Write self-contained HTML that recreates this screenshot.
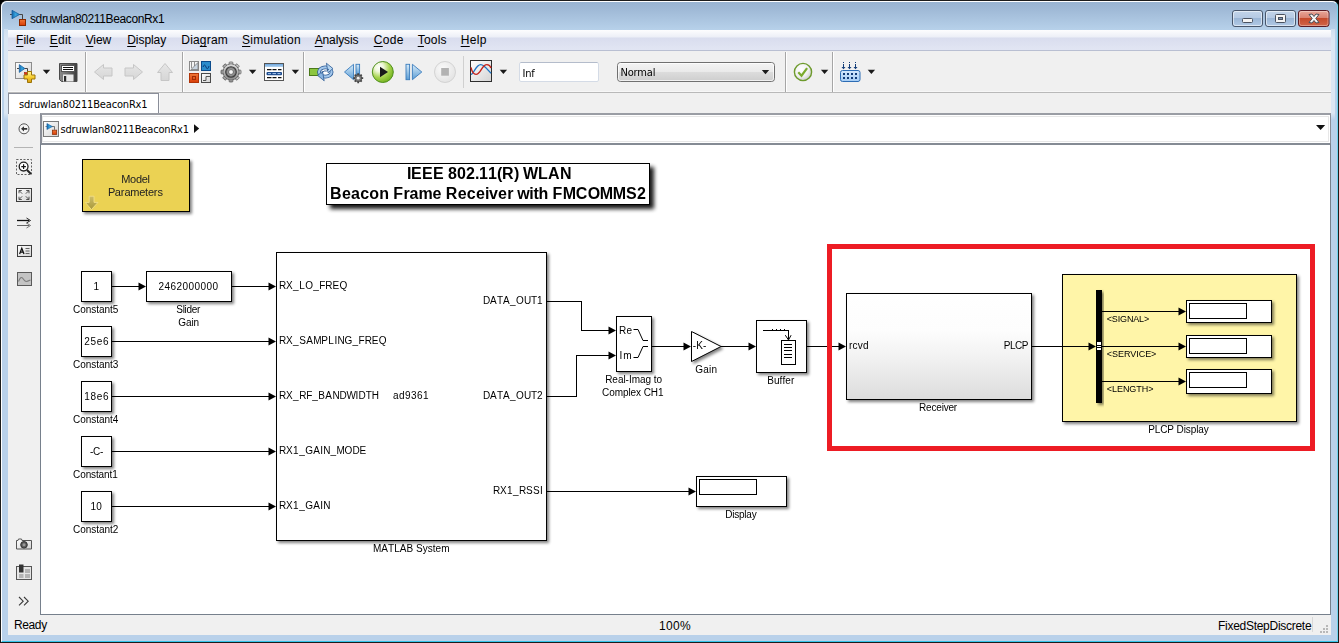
<!DOCTYPE html>
<html><head><meta charset="utf-8"><title>sdruwlan80211BeaconRx1</title>
<style>
*{box-sizing:border-box;margin:0;padding:0}
html,body{width:1339px;height:643px;overflow:hidden;background:#000;font-family:"Liberation Sans",sans-serif;}
#win{position:absolute;left:0;top:0;width:1339px;height:643px;background:linear-gradient(#98b3d1 0,#9fb9d6 8px,#b7d1ea 29px,#b9d1ea 60px,#b9d1ea 100%);border:1px solid #1c1c1c;border-radius:7px 7px 0 0;}
#hl{position:absolute;left:1px;top:1px;width:1337px;height:641px;border:1px solid #fff;border-right-color:#6fd3ee;border-bottom-color:#35c4ea;border-radius:6px 6px 0 0;}
.t{position:absolute;white-space:nowrap;color:#000;line-height:1}
.t u{text-decoration-skip-ink:none;text-underline-offset:2px}
.seg{font-family:"Liberation Sans",sans-serif;font-size:12px;letter-spacing:-0.38px}
.tah{font-family:"DejaVu Sans Condensed","DejaVu Sans",sans-serif;font-size:11px;letter-spacing:-0.17px}
#menubar{position:absolute;left:8px;top:30px;width:1323px;height:21px;background:linear-gradient(#fdfdfe 0,#eceff7 7px,#d9ddee 8px,#e1e5f3 19px,#e1e5f3 100%);border-bottom:1px solid #b9bfd2}
#toolbar{position:absolute;left:8px;top:51px;width:1323px;height:42px;background:#f0f0f0;border-bottom:1px solid #b9b9b9;box-shadow:inset 0 -1px 0 #f7f7f7}
#tabrow{position:absolute;left:8px;top:93px;width:1323px;height:21px;background:#f0f0f0}
#tab{position:absolute;left:0px;top:0px;width:151px;height:21px;background:#fff;border:1px solid #8a8e99;border-bottom:none;box-shadow:1px 0 0 #fafafa}
#main{position:absolute;left:8px;top:114px;width:1323px;height:501px;background:#f0f0f0}
#crumb{position:absolute;left:32px;top:-1px;width:1291px;height:30px;background:#fff;border:2px solid #8a8e98;border-top-color:#9a9da4 ;border-right-width:1px;border-bottom:none}
#crumb i{position:absolute;left:0;top:1px;right:1px;bottom:1px;border:1px solid #e7e7e7}
#canvas{position:absolute;left:32px;top:29px;width:1291px;height:472px;background:#fff;border:1px solid #76808c;border-top:2px solid #858b94}
#status{position:absolute;left:8px;top:615px;width:1323px;height:20px;background:#f0f0f0;}
</style></head><body>
<div id="win"></div><div id="hl"></div>
<div class="t seg" style="left:30px;top:13px">sdruwlan80211BeaconRx1</div>
<div style="position:absolute;left:4px;top:29px;width:4px;height:91px;background:linear-gradient(#cfdff0 0,#dbe7f4 10px,#dbe7f4 84px,#b9d1ea 91px)"></div><div style="position:absolute;left:1331px;top:29px;width:4px;height:91px;background:linear-gradient(#cfdff0 0,#dbe7f4 10px,#dbe7f4 84px,#b9d1ea 91px)"></div>
<div id="menubar"></div>
<div class="t seg" style="left:16.1px;top:34px;letter-spacing:-0.03px"><u>F</u>ile</div>
<div class="t seg" style="left:49.7px;top:34px;letter-spacing:0.27px"><u>E</u>dit</div>
<div class="t seg" style="left:85.7px;top:34px;letter-spacing:-0.13px"><u>V</u>iew</div>
<div class="t seg" style="left:127.2px;top:34px;letter-spacing:-0.05px"><u>D</u>isplay</div>
<div class="t seg" style="left:181.3px;top:34px;letter-spacing:0.18px">Dia<u>g</u>ram</div>
<div class="t seg" style="left:242.0px;top:34px;letter-spacing:0.29px"><u>S</u>imulation</div>
<div class="t seg" style="left:314.7px;top:34px;letter-spacing:-0.13px"><u>A</u>nalysis</div>
<div class="t seg" style="left:373.7px;top:34px;letter-spacing:0.37px"><u>C</u>ode</div>
<div class="t seg" style="left:417.7px;top:34px;letter-spacing:0.22px"><u>T</u>ools</div>
<div class="t seg" style="left:460.7px;top:34px;letter-spacing:0.37px"><u>H</u>elp</div>

<div id="toolbar"></div>
<div id="tabrow"><div id="tab"></div></div>
<div class="t tah" style="left:19px;top:99px">sdruwlan80211BeaconRx1</div>
<div id="main">
<div id="crumb"><i></i></div>
<div id="canvas"></div>
</div>
<div class="t tah" style="left:60.500px;top:124px">sdruwlan80211BeaconRx1</div>
<div id="status"></div>
<div class="t seg" style="left:14px;top:619px">Ready</div>
<div class="t seg" style="left:659px;top:620px;letter-spacing:0.3px">100%</div>
<div class="t seg" style="left:1218px;top:620px;letter-spacing:-0.28px">FixedStepDiscrete</div>
<svg id="ov" width="1339" height="643" style="position:absolute;left:0;top:0;will-change:transform">
<defs>
<linearGradient id="gDoc" x1="0" y1="0" x2="1" y2="1"><stop offset="0" stop-color="#fff"/><stop offset="1" stop-color="#d4d4d4"/></linearGradient>
<linearGradient id="gBlueTri" x1="0" y1="0" x2="1" y2="0"><stop offset="0" stop-color="#1464a8"/><stop offset="0.5" stop-color="#3aa8e0"/><stop offset="1" stop-color="#1c78c0"/></linearGradient>
<linearGradient id="gOr" x1="0" y1="0" x2="0" y2="1"><stop offset="0" stop-color="#f07838"/><stop offset="1" stop-color="#d83c08"/></linearGradient>
<linearGradient id="gGold" x1="0" y1="0" x2="0" y2="1"><stop offset="0" stop-color="#fff6a0"/><stop offset="0.5" stop-color="#f8d030"/><stop offset="1" stop-color="#d89c10"/></linearGradient>
<linearGradient id="gFlop" x1="0" y1="0" x2="1" y2="0"><stop offset="0" stop-color="#8a8a8a"/><stop offset="0.5" stop-color="#6a6a6a"/><stop offset="1" stop-color="#3c3c3c"/></linearGradient>
<linearGradient id="gArr" x1="0" y1="0" x2="0" y2="1"><stop offset="0" stop-color="#e6e6e6"/><stop offset="1" stop-color="#d6d6d6"/></linearGradient>
<linearGradient id="gLB" x1="0" y1="0" x2="0" y2="1"><stop offset="0" stop-color="#d8ecfa"/><stop offset="1" stop-color="#5a9cd4"/></linearGradient>
<radialGradient id="gPlay" cx="0.33" cy="0.28" r="0.8"><stop offset="0" stop-color="#fff"/><stop offset="0.25" stop-color="#f0f8dc"/><stop offset="0.6" stop-color="#a8d450"/><stop offset="1" stop-color="#6cae18"/></radialGradient>
<radialGradient id="gStop" cx="0.4" cy="0.35" r="0.7"><stop offset="0" stop-color="#fafafa"/><stop offset="1" stop-color="#e2e2e2"/></radialGradient>
<radialGradient id="gChk" cx="0.4" cy="0.35" r="0.7"><stop offset="0" stop-color="#fff"/><stop offset="0.6" stop-color="#f0f0f0"/><stop offset="1" stop-color="#c4c4c4"/></radialGradient>
<linearGradient id="gCombo" x1="0" y1="0" x2="0" y2="1"><stop offset="0" stop-color="#f4f4f4"/><stop offset="0.48" stop-color="#eaeaea"/><stop offset="0.52" stop-color="#dcdcdc"/><stop offset="1" stop-color="#cdcdcd"/></linearGradient>
<linearGradient id="gBtn" x1="0" y1="0" x2="0" y2="1"><stop offset="0" stop-color="#c3d5ea"/><stop offset="0.48" stop-color="#b4c9e3"/><stop offset="0.5" stop-color="#9bb6d6"/><stop offset="1" stop-color="#b3cbe6"/></linearGradient>
<linearGradient id="gClose" x1="0" y1="0" x2="0" y2="1"><stop offset="0" stop-color="#e9a99c"/><stop offset="0.48" stop-color="#d9806e"/><stop offset="0.5" stop-color="#c54a2c"/><stop offset="1" stop-color="#d2674a"/></linearGradient>
<linearGradient id="gGear" x1="0" y1="0" x2="0" y2="1"><stop offset="0" stop-color="#dadada"/><stop offset="1" stop-color="#8c8c8c"/></linearGradient>
<linearGradient id="gTblH" x1="0" y1="0" x2="0" y2="1"><stop offset="0" stop-color="#6aa4dc"/><stop offset="1" stop-color="#b4d4f0"/></linearGradient>
<linearGradient id="gBld" x1="0" y1="0" x2="0" y2="1"><stop offset="0" stop-color="#d4e8fc"/><stop offset="1" stop-color="#a4ccf4"/></linearGradient>
<path id="dd" d="M0 0h7.400l-3.700 4.200z" fill="#1a1a1a"/>
<g id="mdl"><path d="M0 4.500h2M9 4.500h3.500v4.500" stroke="#444" fill="none"/><path d="M2 0.300l7.500 4.200l-7.500 4.200z" fill="url(#gBlueTri)" stroke="#175f9f" stroke-width="0.800"/><rect x="9.500" y="9.500" width="6" height="6" fill="url(#gOr)" stroke="#8a2a00"/></g>
</defs>
<!-- title icon -->
<use href="#mdl" x="10" y="10"/>
<!-- caption buttons -->
<g stroke="#48566b" stroke-width="1">
<rect x="1232.500" y="10.500" width="30" height="16" rx="2.500" fill="url(#gBtn)"/>
<rect x="1265.500" y="10.500" width="30" height="16" rx="2.500" fill="url(#gBtn)"/>
<rect x="1298.500" y="10.500" width="30.500" height="16" rx="2.500" fill="url(#gClose)" stroke="#5a1a24"/>
</g>
<g fill="none" stroke="rgba(255,255,255,.55)"><rect x="1233.500" y="11.500" width="28" height="14" rx="2"/><rect x="1266.500" y="11.500" width="28" height="14" rx="2"/><rect x="1299.500" y="11.500" width="28.500" height="14" rx="2" stroke="rgba(255,255,255,.35)"/></g>
<rect x="1242.500" y="18.500" width="10" height="4" rx="1" fill="#f4f4f4" stroke="#4a5260"/>
<rect x="1275.500" y="14.500" width="10" height="8" rx="1" fill="#f4f4f4" stroke="#4a5260"/><rect x="1278.500" y="17.500" width="4" height="2" fill="#7f95b4" stroke="#4a5260"/>
<path d="M1309 14.500l3-0.500l2 2.500l2-2.500l3 0.500l-3.200 4l3.200 4l-3 0.500l-2-2.500l-2 2.500l-3-0.500l3.200-4z" fill="#f6f6f6" stroke="#4b4f58" stroke-width="1" stroke-linejoin="round"/>
<!-- toolbar separators -->
<g stroke="#a6a6a6"><path d="M85.500 52V92M182.500 52V92M303.500 52V92M785.500 52V92M832.500 52V92"/><path d="M463.500 56V88" stroke="#d0d0d0"/></g>
<g stroke="#fff"><path d="M86.500 52V92M183.500 52V92M304.500 52V92M786.500 52V92M833.500 52V92"/></g>
<!-- new model -->
<rect x="15.500" y="62.500" width="16" height="16" fill="url(#gDoc)" stroke="#8c8c8c"/>
<path d="M17 68.500h2M24.500 68.500h3v3.500" stroke="#444" fill="none"/><path d="M19.300 64.600l5.600 3.900l-5.600 3.900z" fill="url(#gBlueTri)" stroke="#175f9f" stroke-width="0.700"/><rect x="24.500" y="72.500" width="3" height="2" fill="#e03010" stroke="#a02000" stroke-width="0.600"/>
<path d="M27.500 71.500h4v3.500h3.500v4h-3.500v3.500h-4v-3.500h-3.500v-4h3.500z" fill="url(#gGold)" stroke="#9c7408" stroke-width="1"/>
<use href="#dd" x="42.800" y="69.800"/>
<!-- save -->
<path d="M59.500 63.500h17.500v18h-15.500l-2-2z" fill="url(#gFlop)" stroke="#4a4a4a"/>
<rect x="61.500" y="65.500" width="13" height="6" fill="#fff" stroke="#555"/><path d="M63 67.500h10M63 69.500h10" stroke="#111"/>
<rect x="63" y="74.500" width="10.500" height="7" fill="#e9e9e9"/><rect x="64" y="76" width="2.200" height="5.500" fill="#2a2a2a"/>
<!-- nav arrows -->
<g fill="url(#gArr)" stroke="#c6c6c6"><path d="M94.500 72l9-7.500v3.500h8.500v8h-8.500v3.500z"/><path d="M142.500 72l-9-7.500v3.500h-8.500v8h8.500v3.500z"/><path d="M165 63.500l7.500 9h-3.500v8h-8v-8h-3.500z"/></g>
<!-- library browser -->
<rect x="189.500" y="61.500" width="9" height="9" fill="#f4f4f4" stroke="#8a8a8a"/><path d="M191.500 62v6M194.500 62v4M191 69.500l7-7v7z" stroke="#777" fill="#c8d4e0" stroke-width="0.800"/>
<rect x="201.500" y="61.500" width="9" height="9" fill="#2a8ccc" stroke="#0c4c8c"/><path d="M203 67q1.500-4 3 0t3-1" stroke="#0a3c78" fill="none" stroke-width="1"/>
<rect x="189.500" y="73.500" width="9" height="9" fill="url(#gOr)" stroke="#b03408"/><rect x="192.500" y="76.500" width="3" height="3" fill="none" stroke="#a02c04"/>
<rect x="201.500" y="73.500" width="9" height="9" fill="url(#gDoc)" stroke="#4a4a4a"/><path d="M203 80.500h3v-4h4" stroke="#555" fill="none"/>
<!-- gear -->
<g transform="translate(231 72)"><g fill="url(#gGear)" stroke="#505050" stroke-width="0.700"><g id="teeth"><rect x="-1.900" y="-10" width="3.800" height="3.500" rx="0.800"/><rect x="-1.900" y="6.500" width="3.800" height="3.500" rx="0.800"/></g>
<use href="#teeth" transform="rotate(45)"/><use href="#teeth" transform="rotate(90)"/><use href="#teeth" transform="rotate(135)"/><circle r="8"/></g>
<circle r="7.400" fill="url(#gGear)"/><circle r="5.300" fill="#7a7a7a" stroke="#3c3c3c" stroke-width="1.100"/><circle r="3.300" fill="none" stroke="#a8a8a8" stroke-width="0.900"/><circle r="2.400" fill="#f8f8f8" stroke="#444" stroke-width="0.600"/></g>
<use href="#dd" x="248.900" y="69.800"/>
<!-- table -->
<rect x="264.500" y="63.500" width="19" height="17" fill="#fff" stroke="#555"/><rect x="265" y="64" width="18" height="3" fill="url(#gTblH)"/>
<g stroke="#111" stroke-width="1.200"><path d="M267 69.600h4.500M272.500 69.600h4M278 69.600h3.500M267 77.600h4.500M272.500 77.600h4M278 77.600h3.500"/></g>
<rect x="266.500" y="72" width="15.500" height="3.200" rx="1" fill="#1c4a8c"/><path d="M268 73.600h3M272.500 73.600h3.500M277.500 73.600h3" stroke="#a8c8f0" stroke-width="1"/>
<use href="#dd" x="291.700" y="69.800"/>
<!-- update diagram -->
<rect x="309.500" y="68.500" width="9" height="7" fill="#8cc63f" stroke="#4b7a1a"/>
<ellipse cx="325.300" cy="72" rx="6.300" ry="4.700" fill="#fff" stroke="#2c5a94" stroke-width="3.800"/><ellipse cx="325.300" cy="72" rx="6.300" ry="4.700" fill="none" stroke="#a4c8ec" stroke-width="2.200"/>
<path d="M326.400 63.200l6.500 5.300l-4.800 4.300z" fill="#b4d4f0" stroke="#2c5a94" stroke-width="0.800" stroke-linejoin="round"/><path d="M324.200 80.800l-6.500-5.300l4.800-4.300z" fill="#8ab4e0" stroke="#2c5a94" stroke-width="0.800" stroke-linejoin="round"/>
<path d="M321.500 73.500l2.500-2.500h2.500l2.500-2" stroke="#2c5a94" stroke-width="0.900" fill="none"/>
<!-- step back -->
<path d="M344.500 72l9-7.700v15.400z" fill="url(#gLB)" stroke="#3a7cbc" stroke-width="0.900"/><rect x="356" y="64.300" width="3.600" height="10" fill="url(#gLB)" stroke="#3a7cbc" stroke-width="0.900"/>
<g transform="translate(358.200 78.200)"><circle r="3.600" fill="#666" stroke="#333" stroke-width="0.600"/><g stroke="#444" stroke-width="1.800"><path d="M0-5V5M-5 0H5M-3.500-3.500L3.500 3.500M-3.500 3.500L3.500-3.500"/></g><circle r="3" fill="#777"/><circle r="1.400" fill="#f0f0f0"/></g>
<!-- play -->
<circle cx="382.800" cy="72" r="10.500" fill="url(#gPlay)" stroke="#4f8f1c" stroke-width="1"/><path d="M380 66.800l8 5.200l-8 5.200z" fill="#1a1a1a"/>
<!-- step fwd -->
<rect x="406" y="64.300" width="3.600" height="15.400" fill="url(#gLB)" stroke="#3a7cbc" stroke-width="0.900"/><path d="M412.400 64.300l9.400 7.700l-9.400 7.700z" fill="url(#gLB)" stroke="#3a7cbc" stroke-width="0.900"/>
<!-- stop -->
<circle cx="445" cy="72" r="10.500" fill="url(#gStop)" stroke="#d2d2d2" stroke-width="1"/><rect x="441.200" y="68" width="7.700" height="7.700" fill="#b2b2b2"/>
<!-- scope -->
<rect x="470.500" y="60.500" width="21" height="21" fill="url(#gDoc)" stroke="#2e2e2e"/>
<path d="M471 74.400C474 74.400 475.500 64.600 480.800 64.600C484 64.600 487 69 491 73.300" stroke="#1c74c4" fill="none" stroke-width="1.400"/><path d="M471 67.400C472 72 474 74.400 476 74.400C481 74.400 481.500 64.600 486.900 64.600C489 64.600 490.500 66.500 491 68" stroke="#c4241c" fill="none" stroke-width="1.400"/>
<use href="#dd" x="499.700" y="69.800"/>
<!-- Inf field -->
<rect x="519.500" y="62.500" width="79" height="19" rx="1.500" fill="#fff" stroke="#d4dbe6"/><path d="M520.500 62.500h77" stroke="#b4bccb"/>
<!-- combo -->
<rect x="617.500" y="62.500" width="157" height="19" rx="3" fill="url(#gCombo)" stroke="#707070"/><rect x="618.500" y="63.500" width="155" height="17" rx="2" fill="none" stroke="rgba(255,255,255,.7)"/>
<use href="#dd" x="761.800" y="70"/>
<!-- check -->
<circle cx="803" cy="72" r="8.600" fill="url(#gChk)" stroke="#6d9a2c" stroke-width="1.400"/><path d="M798.300 72.300l3.200 3.400l5.600-7.600" stroke="#7bab2e" stroke-width="2.200" fill="none"/>
<use href="#dd" x="820.900" y="69.800"/>
<!-- build -->
<rect x="840.500" y="70.500" width="19.500" height="11" rx="2" fill="url(#gBld)" stroke="#2c6cb4"/>
<g fill="#123c78"><rect x="843" y="73" width="2" height="2"/><rect x="847" y="73" width="2" height="2"/><rect x="851" y="73" width="2" height="2"/><rect x="855" y="73" width="2" height="2"/><rect x="843" y="77" width="2" height="2"/><rect x="847" y="77" width="2" height="2"/><rect x="851" y="77" width="2" height="2"/><rect x="855" y="77" width="2" height="2"/>
<path id="ba" d="M843 62h1v1h-1zM843 64h1v3h1.500l-2 2.300l-2-2.300h1.500z"/><use href="#ba" x="6"/><use href="#ba" x="12"/></g>
<use href="#dd" x="867.700" y="69.800"/>
<!-- breadcrumb -->
<circle cx="24" cy="128.800" r="5" fill="#f4f4f4" stroke="#555" stroke-width="1"/><path d="M21 128.800l3-2.600v1.700h3.200v1.800h-3.200v1.700z" fill="#333"/>
<rect x="43.500" y="121.500" width="15" height="15" fill="url(#gDoc)" stroke="#7a7a7a"/>
<g transform="translate(45.500 123.300) scale(0.720)"><use href="#mdl"/></g>
<path d="M194 124.200l5.200 4.400l-5.200 4.400z" fill="#111"/>
<path d="M1316 125h9.200l-4.600 5z" fill="#111"/>
<!-- palette -->
<path d="M14 147.500h19" stroke="#b4b4b4"/>
<rect x="16.500" y="159.500" width="15" height="15" fill="none" stroke="#555" stroke-dasharray="2 1.500" stroke-width="0.900"/><circle cx="23.600" cy="166.600" r="4.400" fill="#fff" stroke="#222" stroke-width="1.300"/><path d="M21.300 166.600h4.600M23.600 164.300v4.600" stroke="#111" stroke-width="1.200"/><path d="M27 170l4 4" stroke="#222" stroke-width="2"/>
<rect x="16.500" y="188.500" width="15" height="13" fill="url(#gDoc)" stroke="#3c3c3c" stroke-width="1"/><path d="M19 193.300v-2.800h2.800M19.300 190.800l2.900 2.900M29 193.300v-2.800h-2.800M28.700 190.800l-2.900 2.900M19 196.700v2.800h2.800M19.300 199.200l2.900-2.900M29 196.700v2.800h-2.800M28.700 199.200l-2.900-2.900" stroke="#3a3a3a" stroke-width="0.850" fill="none"/>
<path d="M17 220.500h12" stroke="#111" stroke-width="1.300"/><path d="M17 225.500h12" stroke="#555" stroke-width="0.900"/><path d="M26.500 218l4 2.500l-4 2.500" stroke="#111" fill="none" stroke-width="0.900"/><path d="M26.500 223l4 2.500l-4 2.500" stroke="#555" fill="none" stroke-width="0.800"/>
<rect x="17.500" y="245.500" width="14" height="11" fill="url(#gDoc)" stroke="#3c3c3c" stroke-width="1"/><path d="M19.600 254l2.200-5.800l2.200 5.800M20.400 252.200h2.800" stroke="#111" fill="none" stroke-width="1.250"/><path d="M25.500 248.500h4M25.500 251h4M25.500 253.500h4" stroke="#444" stroke-width="0.800"/>
<rect x="17.500" y="272.500" width="14" height="13" fill="#c4c4c4" stroke="#5a5a5a" stroke-width="1"/><path d="M18.500 281.500q2.200-6 4.400-3t3.200 3t4.400-1.500" stroke="#7e7e7e" fill="none" stroke-width="1.100"/>
<!-- bottom palette -->
<path d="M16.500 540.500h1.500l0.500-1.500h3l0.500 1.500h9.500v8.500h-15z" fill="url(#gDoc)" stroke="#555"/><circle cx="24" cy="544.800" r="3.300" fill="#5a5a5a" stroke="#333"/><circle cx="24" cy="544.800" r="1.500" fill="#9a9a9a"/>
<rect x="16.500" y="566.500" width="15" height="13" fill="#e6e6e6" stroke="#555"/><rect x="19" y="564.500" width="4.500" height="8" fill="#333"/><rect x="25" y="569" width="5" height="4" fill="#b4b4b4"/><rect x="19" y="574" width="4.500" height="4" fill="#b4b4b4"/><rect x="25" y="574" width="5" height="4" fill="#b4b4b4"/>
<path d="M19 597l4.200 4.200l-4.200 4.200M24 597l4.200 4.200l-4.200 4.200" stroke="#3a3a3a" fill="none" stroke-width="1.100"/>
<!-- status grip -->
<path d="M1312.500 617v15" stroke="#d8d8d8"/>
<g fill="#b8b8b8"><rect x="1326" y="625" width="2" height="2"/><rect x="1326" y="628" width="2" height="2"/><rect x="1326" y="631" width="2" height="2"/><rect x="1323" y="628" width="2" height="2"/><rect x="1323" y="631" width="2" height="2"/><rect x="1320" y="631" width="2" height="2"/></g>

<defs>
<filter id="sh" x="-10%" y="-10%" width="130%" height="140%"><feGaussianBlur in="SourceAlpha" stdDeviation="1.5"/><feOffset dx="1.800" dy="2"/><feComponentTransfer><feFuncA type="linear" slope="0.5"/></feComponentTransfer><feMerge><feMergeNode/><feMergeNode in="SourceGraphic"/></feMerge></filter>
<filter id="sh2" x="-10%" y="-20%" width="130%" height="160%"><feGaussianBlur in="SourceAlpha" stdDeviation="2"/><feOffset dx="3.500" dy="3.500"/><feComponentTransfer><feFuncA type="linear" slope="0.9"/></feComponentTransfer><feMerge><feMergeNode/><feMergeNode in="SourceGraphic"/></feMerge></filter>
<linearGradient id="ag" x1="0" y1="0" x2="0" y2="1"><stop offset="0" stop-color="#cdbd68"/><stop offset="1" stop-color="#a8983a"/></linearGradient>
<linearGradient id="rg" x1="0" y1="0" x2="0" y2="1"><stop offset="0" stop-color="#fff"/><stop offset="0.35" stop-color="#fdfdfd"/><stop offset="0.62" stop-color="#f1f1f1"/><stop offset="1" stop-color="#dcdcdc"/></linearGradient>
</defs>
<g font-family="Liberation Sans, sans-serif" font-size="10" fill="#000" shape-rendering="crispEdges">
<g filter="url(#sh)"><rect x="82.500" y="159.500" width="107" height="52" fill="#ebd253" stroke="#000"/></g>
<g font-size="11" fill="#222"><text x="121.18 130.03 135.88 141.72 147.57" y="183">Model</text><text x="107.95 114.8 120.65 124.5 130.35 139.2 145.05 147.9 153.75 157.6" y="196">Parameters</text></g>
<path d="M89.200 196.200h4.800v6.200h4l-6.600 7.200l-6.100-7.200h3.900z" fill="url(#ag)" stroke="#f2e088" stroke-width="0.900" shape-rendering="auto"/>
<g filter="url(#sh2)"><rect x="326.500" y="163.500" width="323" height="41" fill="#fff" stroke="#000"/></g>
<g font-size="16" font-weight="bold"><text x="407 411 422 433 444 448 457 466 475 479 488 497 502 514 519 523 538 548 560" y="179">IEEE 802.11(R) WLAN</text><text x="329.95 342.01 351.07 360.13 369.19 379.25 389.31 393.37 403.43 409.49 418.55 432.61 441.67 445.73 457.79 466.85 475.91 484.97 489.03 498.09 507.15 513.21 517.27 529.33 533.39 538.45 548.51 552.57 562.63 575.69 587.75 599.81 612.87 625.93 636.99" y="199">Beacon Frame Receiver with FMCOMMS2</text></g>
<g filter="url(#sh)" fill="#fff" stroke="#000">
<rect x="81.5" y="271.5" width="30" height="30"/>
<rect x="146.5" y="271.5" width="85" height="30"/>
<rect x="81.5" y="326.5" width="30" height="30"/>
<rect x="81.5" y="381.5" width="30" height="30"/>
<rect x="81.5" y="436.5" width="30" height="30"/>
<rect x="81.5" y="491.5" width="30" height="30"/>
<rect x="276.5" y="252.5" width="270" height="288"/>
<rect x="616.5" y="316.5" width="35" height="55"/>
<rect x="756.5" y="320.5" width="50" height="52"/>
<rect x="696.5" y="476.5" width="90" height="30"/>
</g>
<g filter="url(#sh)"><rect x="846.500" y="293.500" width="185" height="106" fill="url(#rg)" stroke="#000"/></g>
<g filter="url(#sh)"><rect x="1062.500" y="274.500" width="234" height="147" fill="#fff5a8" stroke="#000"/></g>
<text x="93.5" y="290">1</text>
<text x="158.5 164.5 170.5 176.5 182.5 188.5 194.5 200.5 206.5 212.5" y="290">2462000000</text>
<text x="84.2 90.42 96.65 102.88" y="345">25e6</text>
<text x="84.14 90.45 96.76 103.08" y="400">18e6</text>
<text x="89.96 93.09 100.11" y="455">-C-</text>
<text x="90.54 96.13" y="510">10</text>
<text x="73.09 80.27 85.79 91.3 96.26 98.99 104.51 110.02 112.76" y="313">Constant5</text>
<text x="73.09 80.27 85.79 91.31 96.27 99 104.52 110.04 112.78" y="368">Constant3</text>
<text x="73.09 80.28 85.8 91.33 96.29 99.04 104.56 110.09 112.83" y="423">Constant4</text>
<text x="73.09 80.19 85.63 91.07 95.94 98.6 104.03 109.47 112.13" y="478">Constant1</text>
<text x="73.09 80.28 85.81 91.33 96.3 99.04 104.57 110.1 112.84" y="533">Constant2</text>
<text x="176.35 182.71 184.62 186.53 191.78 197.04" y="313">Slider</text>
<text x="178.3 185.99 191.46 193.59" y="326">Gain</text>
<text x="372.98 381.34 388.04 394.18 399.77 406.47 413.17 415.97 422.67 427.7 432.73 435.54 441.13" y="552">MATLAB System</text>
<text x="605.18 612.36 617.89 623.41 625.6 628.89 631.63 639.93 645.45 650.98 653.72 656.46" y="383">Real-Imag to</text>
<text x="602.09 609.23 614.71 622.95 628.43 630.57 636.04 640.96 643.65 650.79 657.93" y="396">Complex CH1</text>
<text x="695.3 703.29 709.06 711.49" y="373">Gain</text>
<text x="767.18 773.93 779.57 782.43 785.29 790.94" y="384">Buffer</text>
<text x="725.18 732.19 734.21 739 744.35 746.37 751.72" y="518">Display</text>
<text x="919.08 926.11 931.47 936.28 941.64 943.67 948.47 953.84" y="411">Receiver</text>
<text x="1148.18 1154.75 1160.2 1167.32 1173.88 1176.56 1183.68 1185.79 1190.69 1196.15 1198.26 1203.72" y="433">PLCP Display</text>
<text x="279 286.05 293.1 299.15 305.2 313.25 319.3 325.35 332.4 339.45" y="289">RX_LO_FREQ</text>
<text x="279 286.05 293.1 299.15 306.2 313.25 321.3 328.35 334.4 337.45 344.5 352.55 358.6 364.65 371.7 378.75" y="344">RX_SAMPLING_FREQ</text>
<text x="279 286.05 293.1 299.15 306.2 312.25 318.3 325.35 332.4 339.45 346.5 355.55 358.6 365.65 371.7" y="399">RX_RF_BANDWIDTH</text>
<text x="279 286.05 293.1 299.15 305.2 313.25 320.3 323.35 330.4 336.45 344.5 352.55 359.6" y="454">RX1_GAIN_MODE</text>
<text x="279 286.05 293.1 299.15 305.2 313.25 320.3 323.35" y="509">RX1_GAIN</text>
<text x="393 399 405 411 417 423" y="399">ad9361</text>
<text x="483 490 497 503 510 516 524 531 537" y="304">DATA_OUT1</text>
<text x="483 490 497 503 510 516 524 531 537" y="399">DATA_OUT2</text>
<text x="493 500 507 513 519 526 533 540" y="494">RX1_RSSI</text>
<g stroke="#000" fill="none">
<path d="M112 286.500H140M232 286.500H270M112 341.500H270M112 396.500H270M112 451.500H270M112 506.500H270"/>
<path d="M547 301.500H581.500V330.500H610M547 396.500H576.500V355.500H610"/>
<path d="M652 346.500H685M721 346.500H750M807 346.500H840M1032 346.500H1090M547 491.500H690"/>
<path d="M1102 311.500H1180M1102 346.500H1180M1102 381.500H1180"/>
</g>
<g fill="#000" shape-rendering="auto">
<path d="M146 286.5l-7.500-4v8z"/>
<path d="M276 286.5l-7.500-4v8z"/>
<path d="M276 341.5l-7.500-4v8z"/>
<path d="M276 396.5l-7.500-4v8z"/>
<path d="M276 451.5l-7.500-4v8z"/>
<path d="M276 506.5l-7.500-4v8z"/>
<path d="M616 330.5l-7.500-4v8z"/>
<path d="M616 355.5l-7.500-4v8z"/>
<path d="M691 346.5l-7.500-4v8z"/>
<path d="M756 346.5l-7.500-4v8z"/>
<path d="M846 346.5l-7.500-4v8z"/>
<path d="M1096 346.5l-7.500-4v8z"/>
<path d="M696 491.5l-7.500-4v8z"/>
<path d="M1186 311.5l-7.500-4v8z"/>
<path d="M1186 346.5l-7.500-4v8z"/>
<path d="M1186 381.5l-7.500-4v8z"/>
</g>
<text x="618.88 626.58" y="334">Re</text><text x="619.48 623.13" y="359">Im</text>
<path d="M633.500 329.500h4.500l5 11h5M633.500 357.500h4.500l5-11h5" stroke="#000" fill="none" shape-rendering="auto"/>
<g filter="url(#sh)"><path d="M691.500 331.500v30l29.500-15z" fill="#fff" stroke="#000" shape-rendering="auto"/></g>
<text x="692.76 696.27 703.11" y="349">-K-</text>
<g stroke="#000" fill="none"><path d="M763 330.500H788.500V339"/><rect x="781.500" y="340.500" width="14" height="24" fill="#fff"/><path d="M784 344.500h8M784 347.500h8M784 350.500h8M784 354.500h8M784 357.500h8"/><path d="M772 329.500h1M776 329.500h1M780 329.500h1M784 329.500h1"/></g>
<path d="M785.300 335.200l3.200 4.800l2.600-4.800" stroke="#000" fill="none" shape-rendering="auto"/>
<rect x="699.500" y="479.500" width="57" height="15" fill="#fff" stroke="#000"/>
<rect x="829.500" y="246.500" width="483" height="202" fill="none" stroke="#ed1c24" stroke-width="5"/>
<text x="848.94 852.54 857.81 863.08" y="349">rcvd</text><text x="1003.68 1009.89 1014.99 1021.76" y="349">PLCP</text>
<g filter="url(#sh)"><rect x="1096" y="290" width="6" height="113" fill="#000"/></g>
<rect x="1097" y="342" width="4" height="8" fill="#fff"/><path d="M1097 345.500h4M1097 347.500h4" stroke="#000"/>
<g filter="url(#sh)" fill="#fff" stroke="#000"><rect x="1186.500" y="300.500" width="85" height="22"/><rect x="1186.500" y="335.500" width="85" height="22"/><rect x="1186.500" y="369.500" width="85" height="24"/></g>
<g fill="#fff" stroke="#000"><rect x="1189.500" y="303.500" width="57" height="15"/><rect x="1189.500" y="338.500" width="57" height="15"/><rect x="1189.500" y="372.500" width="57" height="15"/></g>
<g font-size="9"><text x="1106.66 1111.78 1117.65 1120.01 1126.88 1133.24 1139.11 1143.98" y="322">&lt;SIGNAL&gt;</text><text x="1106.86 1112.04 1117.98 1123.92 1130.35 1136.28 1138.72 1145.15 1151.08" y="357">&lt;SERVICE&gt;</text><text x="1106.86 1112.05 1116.99 1122.93 1129.37 1136.31 1141.75 1148.18" y="392">&lt;LENGTH&gt;</text></g>
</g>
</svg>
<div class="t tah" style="left:522.500px;top:68px">Inf</div>
<div class="t tah" style="left:620.500px;top:67px">Normal</div>
</body></html>
